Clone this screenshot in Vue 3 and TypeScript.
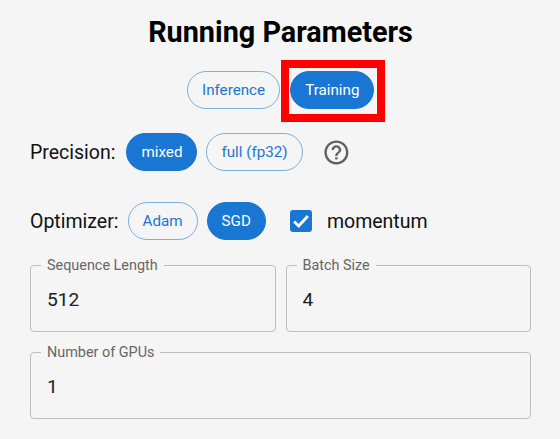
<script setup lang="ts">
const precision: string[] = ['mixed', 'full (fp32)']
</script>

<template>
  <div class="page">
    <h1 class="title">Running Parameters</h1>
    <div class="modes">
      <button class="pill outline">Inference</button>
      <span class="mark"><button class="pill filled">Training</button></span>
    </div>
    <div class="row precision">
      <span class="label">Precision:</span>
      <button class="pill filled">{{ precision[0] }}</button>
      <button class="pill outline">{{ precision[1] }}</button>
      <svg class="help" width="28.8" height="28.8" viewBox="0 0 24 24"><path fill="#616161" d="M11 18h2v-2h-2v2zm1-16C6.48 2 2 6.48 2 12s4.48 10 10 10 10-4.48 10-10S17.52 2 12 2zm0 18c-4.41 0-8-3.59-8-8s3.59-8 8-8 8 3.59 8 8-3.59 8-8 8zm0-14c-2.21 0-4 1.79-4 4h2c0-1.1.9-2 2-2s2 .9 2 2c0 2-3 1.75-3 5h2c0-2.25 3-2.5 3-5 0-2.21-1.79-4-4-4z"/></svg>
    </div>
    <div class="row optimizer">
      <span class="label">Optimizer:</span>
      <button class="pill outline">Adam</button>
      <button class="pill filled">SGD</button>
      <span class="check"><svg width="22" height="22" viewBox="0 0 24 24"><path fill="none" stroke="#fff" stroke-width="3" d="M4.5 12.5l5 5L19.5 6.5"/></svg></span>
      <span class="label">momentum</span>
    </div>
    <div class="fields">
      <fieldset class="field"><legend>Sequence Length</legend><span>512</span></fieldset>
      <fieldset class="field"><legend>Batch Size</legend><span>4</span></fieldset>
      <fieldset class="field wide"><legend>Number of GPUs</legend><span>1</span></fieldset>
    </div>
  </div>
</template>

<style>
html, body { margin: 0; background: #f5f5f5; }
</style>

<style scoped>
.page { width: 560px; height: 439px; box-sizing: border-box; padding: 14px 29px 0 30px; font-family: Roboto, sans-serif; color: #212121; overflow: hidden; }
.title { margin: 0; font-size: 28.8px; line-height: 36px; font-weight: 700; text-align: center; color: #000; }
.modes { display: flex; justify-content: flex-start; align-items: center; gap: 10px; margin-top: 21px; padding-left: 157px; }
.mark { display: flex; position: relative; }
.mark::after { content: ""; position: absolute; left: -9px; right: -11px; top: -11px; bottom: -13px; border: 8px solid #f00; pointer-events: none; }
.pill { box-sizing: border-box; height: 38px; border-radius: 19px; padding: 0 14px; font: 400 15.2px Roboto, sans-serif; border: 1px solid #1976d2; cursor: pointer; }
.outline { background: transparent; color: #1976d2; border-color: rgba(25, 118, 210, 0.55); }
.filled { background: #1976d2; color: #fff; }
.row { display: flex; align-items: center; gap: 9px; }
.label { font-size: 19.5px; color: #111; }
.precision { margin-top: 24px; }
.precision .label { margin-right: 2px; }
.help { margin-left: 10px; }
.optimizer { margin-top: 31px; }
.check { width: 22px; height: 22px; background: #1976d2; border-radius: 3px; display: flex; align-items: center; justify-content: center; margin: 0 6px 0 15px; }
.fields { display: grid; grid-template-columns: 1fr 1fr; column-gap: 10px; row-gap: 12px; margin-top: 17px; }
.field { margin: 0; padding: 0; height: 75px; min-width: 0; box-sizing: border-box; border: 1px solid #bdbdbd; border-radius: 4px; font-size: 19.2px; }
.field legend { font-size: 14.4px; line-height: 17px; padding: 0 6px; margin-left: 10px; color: #666; }
.field span { display: block; margin: 14px 0 0 16px; }
.wide { grid-column: 1 / 3; }
</style>
